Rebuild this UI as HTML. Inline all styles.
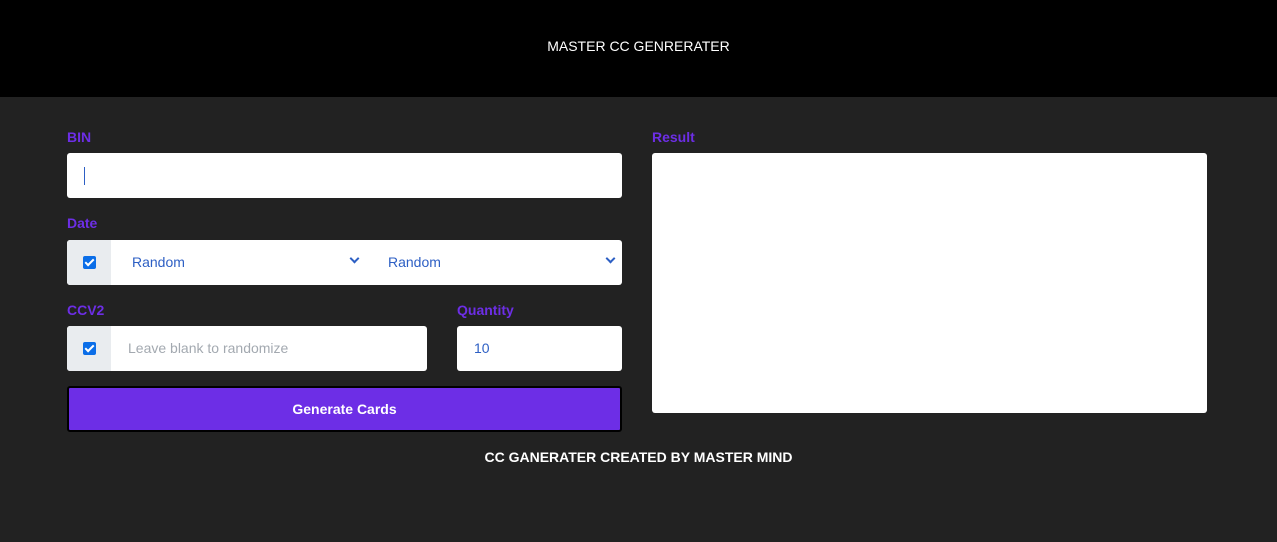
<!DOCTYPE html>
<html><head><style>
*{box-sizing:border-box;margin:0;padding:0}
body{width:1277px;height:542px;background:#222;font-family:"Liberation Sans",sans-serif;position:relative;overflow:hidden}
.hdr{position:absolute;left:0;top:0;width:1277px;height:97px;background:#000;color:#fff;font-size:14px;text-align:center;line-height:93px}
.lbl{position:absolute;color:#6d2ee6;font-weight:bold;font-size:14px}
.box{position:absolute;background:#fff;border-radius:3px}
.chk{position:absolute;left:0;top:0;width:44px;height:100%;background:#e9ecef;border-radius:3px 0 0 3px}
.chk i{position:absolute;left:16px;top:16px;width:13px;height:13px;background:#0b6ee8;border-radius:2px}
.chk i:after{content:"";position:absolute;left:4px;top:1px;width:3px;height:7px;border:solid #fff;border-width:0 2px 2px 0;transform:rotate(45deg)}
.t{position:absolute;color:#2d5fc4;font-size:14px;top:14px}
.arr{position:absolute;top:15px;width:7px;height:7px;border:solid #2d5fc4;border-width:0 2px 2px 0;transform:rotate(45deg)}
</style></head><body>
<div class="hdr">MASTER CC GENRERATER</div>
<div class="lbl" style="left:67px;top:129px">BIN</div>
<div class="box" style="left:67px;top:153px;width:555px;height:45px"><div style="position:absolute;left:17px;top:14px;width:1px;height:18px;background:#2d5fc4"></div></div>
<div class="lbl" style="left:67px;top:215px">Date</div>
<div class="box" style="left:67px;top:240px;width:555px;height:45px"><div class="chk"><i></i></div>
<span class="t" style="left:65px">Random</span><div class="arr" style="left:284px"></div>
<span class="t" style="left:321px">Random</span><div class="arr" style="left:540px"></div></div>
<div class="lbl" style="left:67px;top:302px">CCV2</div>
<div class="lbl" style="left:457px;top:302px">Quantity</div>
<div class="box" style="left:67px;top:326px;width:360px;height:45px"><div class="chk"><i></i></div><span class="t" style="left:61px;color:#a3a9b0">Leave blank to randomize</span></div>
<div class="box" style="left:457px;top:326px;width:165px;height:45px"><span class="t" style="left:17px">10</span></div>
<div style="position:absolute;left:67px;top:386px;width:555px;height:46px;background:#6d2ee6;border:2px solid #000;border-radius:3px;color:#fff;font-weight:bold;font-size:14px;text-align:center;line-height:42px">Generate Cards</div>
<div class="lbl" style="left:652px;top:129px">Result</div>
<div class="box" style="left:652px;top:153px;width:555px;height:260px"></div>
<div style="position:absolute;left:0;width:1277px;top:449px;text-align:center;color:#fff;font-weight:bold;font-size:14px">CC GANERATER CREATED BY MASTER MIND</div>
</body></html>
